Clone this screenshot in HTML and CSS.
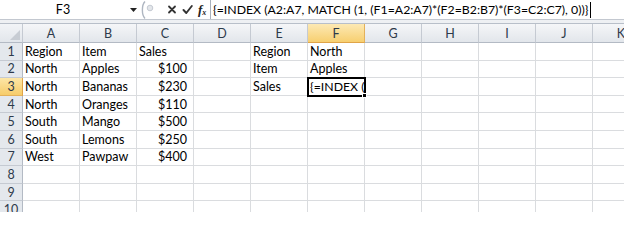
FILE: index.html
```html
<!DOCTYPE html>
<html>
<head>
<meta charset="utf-8">
<link rel="stylesheet" href="styles.css">
</head>
<body>
<div class="app">
  <div class="fbar">
    <div class="namebox">
      <span class="name">F3</span>
      <svg class="arrow" width="7" height="4" viewBox="0 0 7 4"><path d="M0 0H7L3.5 4Z" fill="#222"/></svg>
    </div>
    <div class="tools">
      <svg class="splitter" width="14" height="20" viewBox="0 0 14 20"><path d="M5 1.5C1.5 5 1.5 15 5 18.5" fill="none" stroke="#aeb6c1" stroke-width="1.4"/><circle cx="10" cy="8" r="2.8" fill="#e3e6ea" stroke="#bfc5ce" stroke-width="0.9"/></svg>
      <svg class="btn" width="10" height="20" viewBox="0 0 10 20"><path d="M2 6.5L8 12.5M8 6.5L2 12.5" stroke="#333" stroke-width="1.8" stroke-linecap="round"/></svg>
      <svg class="btn chk" width="11" height="20" viewBox="0 0 11 20"><path d="M1.5 10L4.3 13L9.8 6" fill="none" stroke="#333" stroke-width="1.9" stroke-linecap="round" stroke-linejoin="round"/></svg>
      <span class="fx"><i>f</i><span class="x">x</span></span>
    </div>
    <div class="formula"><span class="ftext">{=INDEX (A2:A7, MATCH (1, (F1=A2:A7)*(F2=B2:B7)*(F3=C2:C7), 0))}</span><span class="caret"></span></div>
  </div>
  <div class="gap"></div>
  <div class="sheet">
    <div class="corner"><svg width="10" height="10" viewBox="0 0 10 10"><path d="M10 0V10H0Z" fill="#c7ccd3"/></svg></div>
    <div class="ch">A</div><div class="ch">B</div><div class="ch">C</div><div class="ch">D</div><div class="ch">E</div><div class="ch hl">F</div><div class="ch">G</div><div class="ch">H</div><div class="ch">I</div><div class="ch">J</div><div class="ch">K</div>

    <div class="rh">1</div><div class="c">Region</div><div class="c">Item</div><div class="c">Sales</div><div class="c"></div><div class="c">Region</div><div class="c">North</div><div class="c"></div><div class="c"></div><div class="c"></div><div class="c"></div><div class="c"></div>

    <div class="rh">2</div><div class="c">North</div><div class="c">Apples</div><div class="c r">$100</div><div class="c"></div><div class="c">Item</div><div class="c">Apples</div><div class="c"></div><div class="c"></div><div class="c"></div><div class="c"></div><div class="c"></div>

    <div class="rh hl">3</div><div class="c">North</div><div class="c">Bananas</div><div class="c r">$230</div><div class="c"></div><div class="c">Sales</div><div class="c sel"><span class="clip">{=INDEX (A2:A7, MATCH</span><span class="handle"></span></div><div class="c"></div><div class="c"></div><div class="c"></div><div class="c"></div><div class="c"></div>

    <div class="rh">4</div><div class="c">North</div><div class="c">Oranges</div><div class="c r">$110</div><div class="c"></div><div class="c"></div><div class="c"></div><div class="c"></div><div class="c"></div><div class="c"></div><div class="c"></div><div class="c"></div>

    <div class="rh">5</div><div class="c">South</div><div class="c">Mango</div><div class="c r">$500</div><div class="c"></div><div class="c"></div><div class="c"></div><div class="c"></div><div class="c"></div><div class="c"></div><div class="c"></div><div class="c"></div>

    <div class="rh">6</div><div class="c">South</div><div class="c">Lemons</div><div class="c r">$250</div><div class="c"></div><div class="c"></div><div class="c"></div><div class="c"></div><div class="c"></div><div class="c"></div><div class="c"></div><div class="c"></div>

    <div class="rh">7</div><div class="c">West</div><div class="c">Pawpaw</div><div class="c r">$400</div><div class="c"></div><div class="c"></div><div class="c"></div><div class="c"></div><div class="c"></div><div class="c"></div><div class="c"></div><div class="c"></div>

    <div class="rh">8</div><div class="c"></div><div class="c"></div><div class="c"></div><div class="c"></div><div class="c"></div><div class="c"></div><div class="c"></div><div class="c"></div><div class="c"></div><div class="c"></div><div class="c"></div>

    <div class="rh">9</div><div class="c"></div><div class="c"></div><div class="c"></div><div class="c"></div><div class="c"></div><div class="c"></div><div class="c"></div><div class="c"></div><div class="c"></div><div class="c"></div><div class="c"></div>

    <div class="rh">10</div><div class="c"></div><div class="c"></div><div class="c"></div><div class="c"></div><div class="c"></div><div class="c"></div><div class="c"></div><div class="c"></div><div class="c"></div><div class="c"></div><div class="c"></div>
  </div>
</div>
</body>
</html>
```

FILE: styles.css
```css
html, body {
  margin: 0;
  padding: 0;
  background: #fff;
}
body {
  width: 624px;
  height: 212px;
  overflow: hidden;
  font-family: Lato, "Open Sans", sans-serif;
  font-size: 12.5px;
  color: #000;
}
.app {
  width: 624px;
  height: 212px;
  overflow: hidden;
  display: flex;
  flex-direction: column;
}
.fbar {
  height: 20px;
  flex: none;
  display: flex;
  box-sizing: border-box;
  border-bottom: 1px solid #c3c8d0;
  background: #fff;
}
.namebox {
  width: 139px;
  flex: none;
  display: flex;
  align-items: center;
}
.name {
  width: 126px;
  text-align: center;
  font-size: 12.5px;
}
.arrow {
  margin-left: 4px;
  margin-top: 1px;
}
.tools {
  width: 71px;
  flex: none;
  display: flex;
  align-items: center;
}
.splitter {
  margin-left: 1px;
}
.btn {
  margin-left: 13px;
}
.chk {
  margin-left: 5px;
}
.fx {
  margin-left: 5px;
  font-family: "Liberation Serif", serif;
  font-size: 13px;
  color: #222;
  display: flex;
  align-items: baseline;
}
.fx i {
  font-weight: bold;
}
.fx .x {
  font-size: 8px;
  font-style: italic;
  font-weight: bold;
  position: relative;
  top: 1px;
}
.formula {
  flex: 1;
  border-left: 1px solid #a9b1bc;
  display: flex;
  align-items: center;
  padding-left: 2px;
  white-space: nowrap;
  overflow: hidden;
}
.ftext {
  font-size: 12.3px;
}
.caret {
  display: inline-block;
  width: 1px;
  height: 16px;
  background: #000;
  margin-left: 2px;
}
.gap {
  height: 3px;
  flex: none;
  background: #eef0f3;
}
.sheet {
  flex: none;
  display: grid;
  grid-template-columns: 23px repeat(11, 57px);
  grid-template-rows: 19px repeat(10, 17.6px);
  border-top: 1px solid #b8bfc9;
  width: 650px;
}
.sheet > div {
  box-sizing: border-box;
  white-space: nowrap;
  overflow: hidden;
  display: flex;
  align-items: center;
}
.corner {
  background: linear-gradient(#f2f4f7, #e2e6eb);
  border-right: 1px solid #c5cad2;
  border-bottom: 1px solid #b3bac4;
  justify-content: flex-end;
  align-items: flex-end !important;
  padding: 0 2px 2px 0;
}
.ch {
  background: linear-gradient(#f5f6f8, #e2e6eb);
  border-right: 1px solid #c5cad2;
  border-bottom: 1px solid #b3bac4;
  justify-content: center;
  color: #2d3a4b;
  font-size: 12.5px;
}
.rh {
  background: #e4e8ed;
  border-right: 1px solid #b3bac4;
  border-bottom: 1px solid #c5cad2;
  justify-content: center;
  color: #2d3a4b;
  font-size: 12.5px;
}
.ch.hl {
  background: linear-gradient(#fde9b4, #f7cf70);
  border-right-color: #e3b15a;
  border-bottom-color: #e0a447;
}
.rh.hl {
  background: linear-gradient(#fde6a6, #f6cc6a);
  border-right-color: #e0a447;
  border-bottom-color: #e3b15a;
}
.c {
  border-right: 1px solid #dadcdf;
  border-bottom: 1px solid #dadcdf;
  padding-left: 2px;
  color: #000;
}
.c.r {
  justify-content: flex-end;
  padding-left: 0;
  padding-right: 6px;
}
.c.sel {
  position: relative;
  z-index: 2;
  overflow: visible !important;
  outline: 2px solid #000;
  outline-offset: -1px;
}
.clip {
  display: block;
  overflow: hidden;
  width: 55px;
  font-size: 12.3px;
  white-space: nowrap;
}
.handle {
  position: absolute;
  right: -3px;
  bottom: -3px;
  width: 5px;
  height: 5px;
  background: #000;
  border: 1px solid #fff;
  box-sizing: border-box;
}
```
